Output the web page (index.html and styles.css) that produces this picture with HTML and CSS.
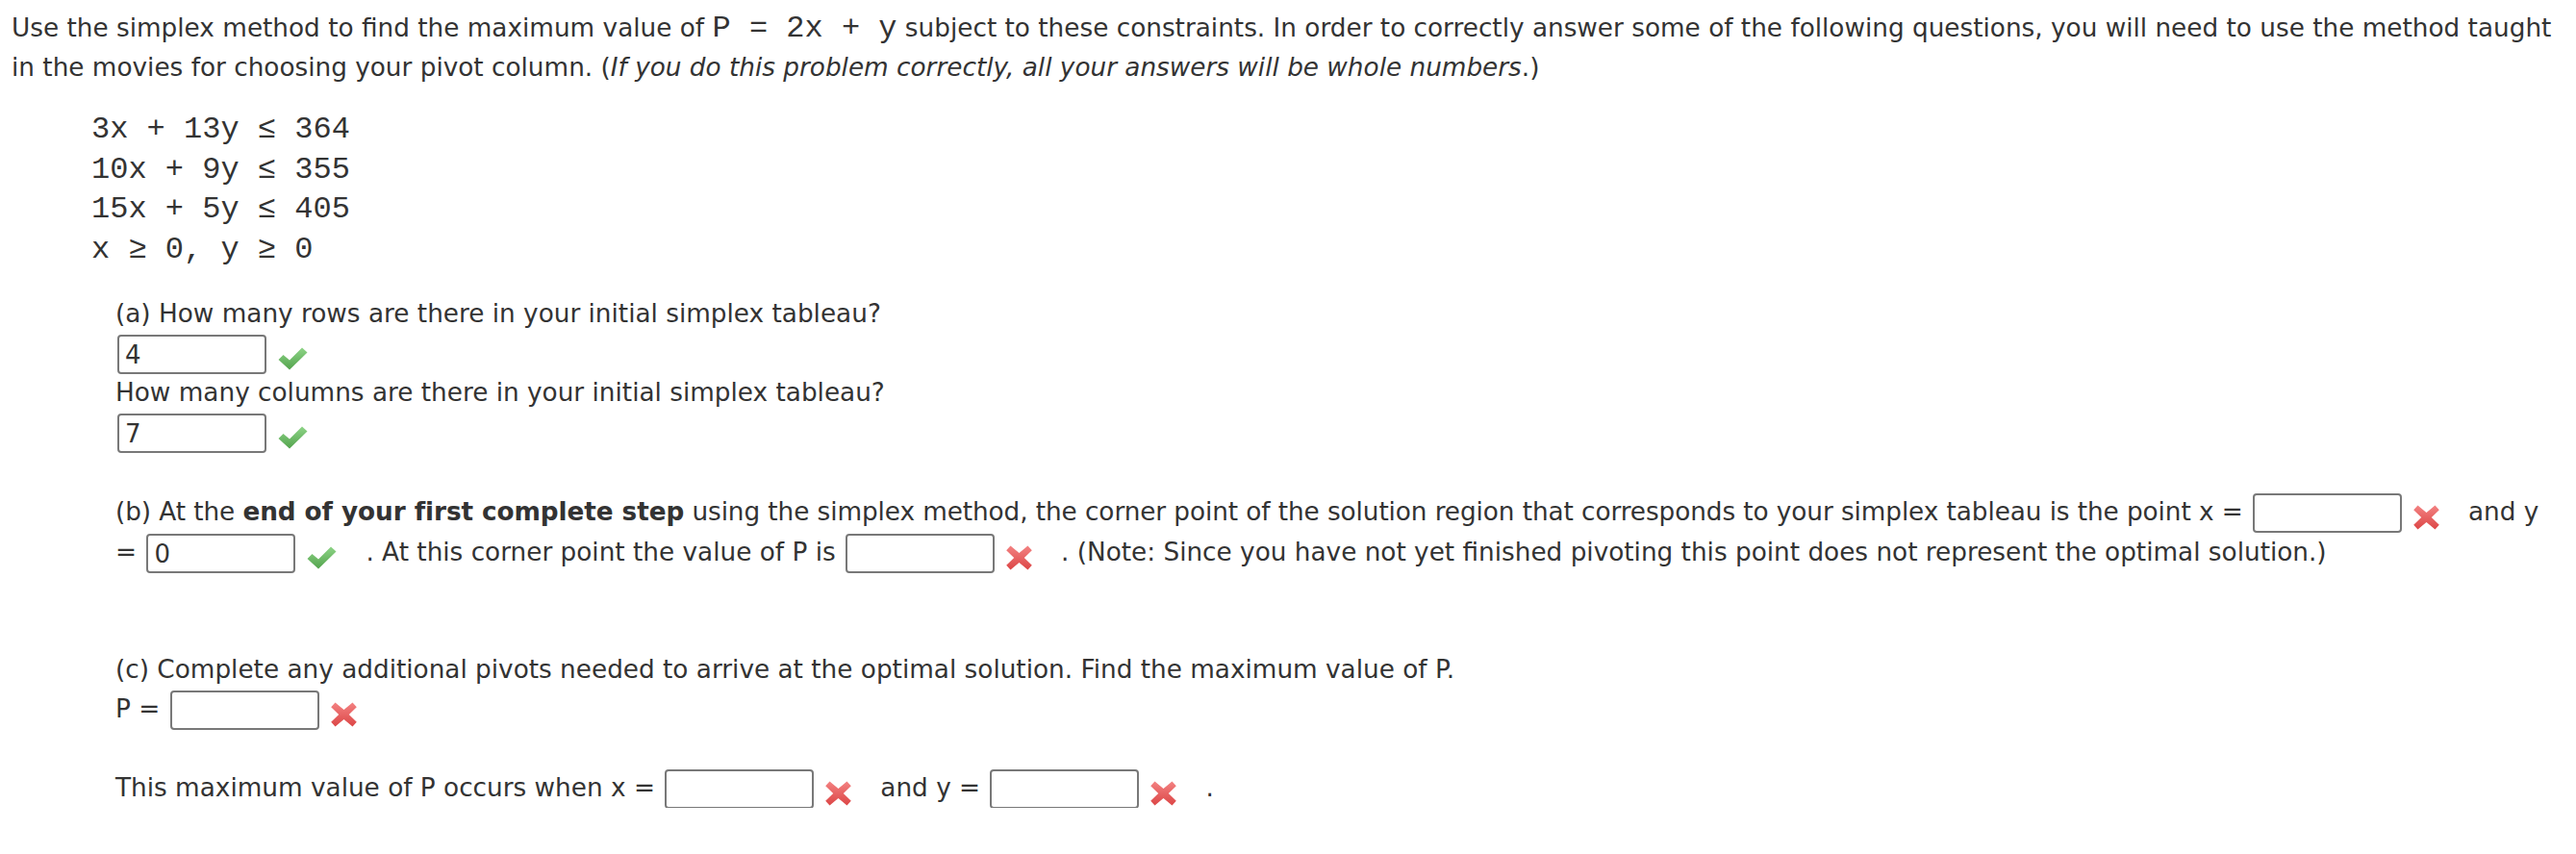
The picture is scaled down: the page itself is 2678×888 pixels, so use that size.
FILE: index.html
```html
<!DOCTYPE html>
<html lang="en">
<head>
<meta charset="utf-8">
<title>Simplex method</title>
<link rel="stylesheet" href="styles.css">
</head>
<body>
<svg class="defs" width="0" height="0" aria-hidden="true">
  <defs>
    <linearGradient id="okg" x1="0" y1="0" x2="0" y2="1">
      <stop offset="0" stop-color="#8ed487"/>
      <stop offset="1" stop-color="#53a34d"/>
    </linearGradient>
    <linearGradient id="badg" x1="0" y1="0" x2="0" y2="1">
      <stop offset="0" stop-color="#f38282"/>
      <stop offset="1" stop-color="#dc4646"/>
    </linearGradient>
  </defs>
</svg>
<div class="problem">
  <p class="intro">Use the simplex method to find the maximum value of <span class="mono">P = 2x + y</span> subject to these constraints. In order to correctly answer some of the following questions, you will need to use the method taught<br>in the movies for choosing your pivot column. (<em>If you do this problem correctly, all your answers will be whole numbers</em>.)</p>

  <div class="constraints">
    <div>3x + 13y ≤ 364</div>
    <div>10x + 9y ≤ 355</div>
    <div>15x + 5y ≤ 405</div>
    <div>x ≥ 0, y ≥ 0</div>
  </div>

  <div class="part part-a">
    <div class="line">(a) How many rows are there in your initial simplex tableau?</div>
    <div class="line"><input class="blank first" type="text" value="4" readonly><span class="mark ok"><svg width="31" height="26" viewBox="0 0 31 26"><path d="M0.5 14 L5.5 9 L12 14.5 L25 1.5 L30.5 6.5 L12 24.5 Z" fill="url(#okg)"/></svg></span></div>
    <div class="line">How many columns are there in your initial simplex tableau?</div>
    <div class="line"><input class="blank first" type="text" value="7" readonly><span class="mark ok"><svg width="31" height="26" viewBox="0 0 31 26"><path d="M0.5 14 L5.5 9 L12 14.5 L25 1.5 L30.5 6.5 L12 24.5 Z" fill="url(#okg)"/></svg></span></div>
  </div>

  <div class="part part-b">
    <div class="line"><span class="tight">(b) At the <b>end of your first complete step</b> using the simplex method, the corner point of the solution region that corresponds to your simplex tableau is the point x =</span> <input class="blank" type="text" value="" readonly><span class="mark bad"><svg width="27" height="26" viewBox="0 0 27 26"><path d="M4.5 0.5 L13.5 8 L22.5 0.5 L26.8 5.2 L18.8 13 L26.8 20.8 L22.5 25.5 L13.5 18 L4.5 25.5 L0.2 20.8 L8.2 13 L0.2 5.2 Z" fill="url(#badg)"/></svg></span>and y<br>= <input class="blank" type="text" value="0" readonly><span class="mark ok"><svg width="31" height="26" viewBox="0 0 31 26"><path d="M0.5 14 L5.5 9 L12 14.5 L25 1.5 L30.5 6.5 L12 24.5 Z" fill="url(#okg)"/></svg></span>. At this corner point the value of P is <input class="blank" type="text" value="" readonly><span class="mark bad"><svg width="27" height="26" viewBox="0 0 27 26"><path d="M4.5 0.5 L13.5 8 L22.5 0.5 L26.8 5.2 L18.8 13 L26.8 20.8 L22.5 25.5 L13.5 18 L4.5 25.5 L0.2 20.8 L8.2 13 L0.2 5.2 Z" fill="url(#badg)"/></svg></span>. (Note: Since you have not yet finished pivoting this point does not represent the optimal solution.)</div>
  </div>

  <div class="part part-c">
    <div class="line">(c) Complete any additional pivots needed to arrive at the optimal solution. Find the maximum value of P.</div>
    <div class="line">P = <input class="blank" type="text" value="" readonly><span class="mark bad"><svg width="27" height="26" viewBox="0 0 27 26"><path d="M4.5 0.5 L13.5 8 L22.5 0.5 L26.8 5.2 L18.8 13 L26.8 20.8 L22.5 25.5 L13.5 18 L4.5 25.5 L0.2 20.8 L8.2 13 L0.2 5.2 Z" fill="url(#badg)"/></svg></span></div>
    <div class="line">&nbsp;</div>
    <div class="line">This maximum value of P occurs when x = <input class="blank" type="text" value="" readonly><span class="mark bad"><svg width="27" height="26" viewBox="0 0 27 26"><path d="M4.5 0.5 L13.5 8 L22.5 0.5 L26.8 5.2 L18.8 13 L26.8 20.8 L22.5 25.5 L13.5 18 L4.5 25.5 L0.2 20.8 L8.2 13 L0.2 5.2 Z" fill="url(#badg)"/></svg></span>and y = <input class="blank" type="text" value="" readonly><span class="mark bad"><svg width="27" height="26" viewBox="0 0 27 26"><path d="M4.5 0.5 L13.5 8 L22.5 0.5 L26.8 5.2 L18.8 13 L26.8 20.8 L22.5 25.5 L13.5 18 L4.5 25.5 L0.2 20.8 L8.2 13 L0.2 5.2 Z" fill="url(#badg)"/></svg></span>.</div>
  </div>
</div>
</body>
</html>
```

FILE: styles.css
```css
html, body {
  margin: 0;
  padding: 0;
  background: #ffffff;
}

body {
  font-family: "DejaVu Sans", Verdana, sans-serif;
  font-size: 26.3px;
  color: #333333;
  padding: 9px 12px 0 12px;
}

.defs {
  position: absolute;
  width: 0;
  height: 0;
  overflow: hidden;
}

.intro {
  margin: 0;
  line-height: 40px;
  white-space: nowrap;
}

.mono {
  font-family: "Courier New", "Nimbus Mono PS", "FreeMono", "Liberation Mono", monospace;
  font-size: 32px;
}

.constraints {
  font-family: "Courier New", "Nimbus Mono PS", "FreeMono", "Liberation Mono", monospace;
  font-size: 32px;
  line-height: 41.5px;
  margin: 24px 0 0 83px;
}

.part {
  margin-left: 108px;
  line-height: 41px;
}

.part-a {
  margin-top: 26px;
}

.part-b {
  margin-top: 42px;
  white-space: nowrap;
}

.part-c {
  margin-top: 123px;
}

.line {
  height: 41px;
  white-space: nowrap;
}

.tight {
  letter-spacing: -0.08px;
}

.blank {
  box-sizing: border-box;
  width: 155px;
  height: 41px;
  margin: 0 0 0 2px;
  padding: 0 6px;
  border: 2px solid #787878;
  border-radius: 4px;
  font-family: "DejaVu Sans", Verdana, sans-serif;
  font-size: 26px;
  color: #333333;
  background: #ffffff;
  vertical-align: middle;
  outline: none;
}

.mark {
  display: inline-block;
  vertical-align: middle;
  margin: 0 30px 0 12px;
  line-height: 0;
  position: relative;
  top: 4px;
}

.mark svg {
  display: block;
}
```
